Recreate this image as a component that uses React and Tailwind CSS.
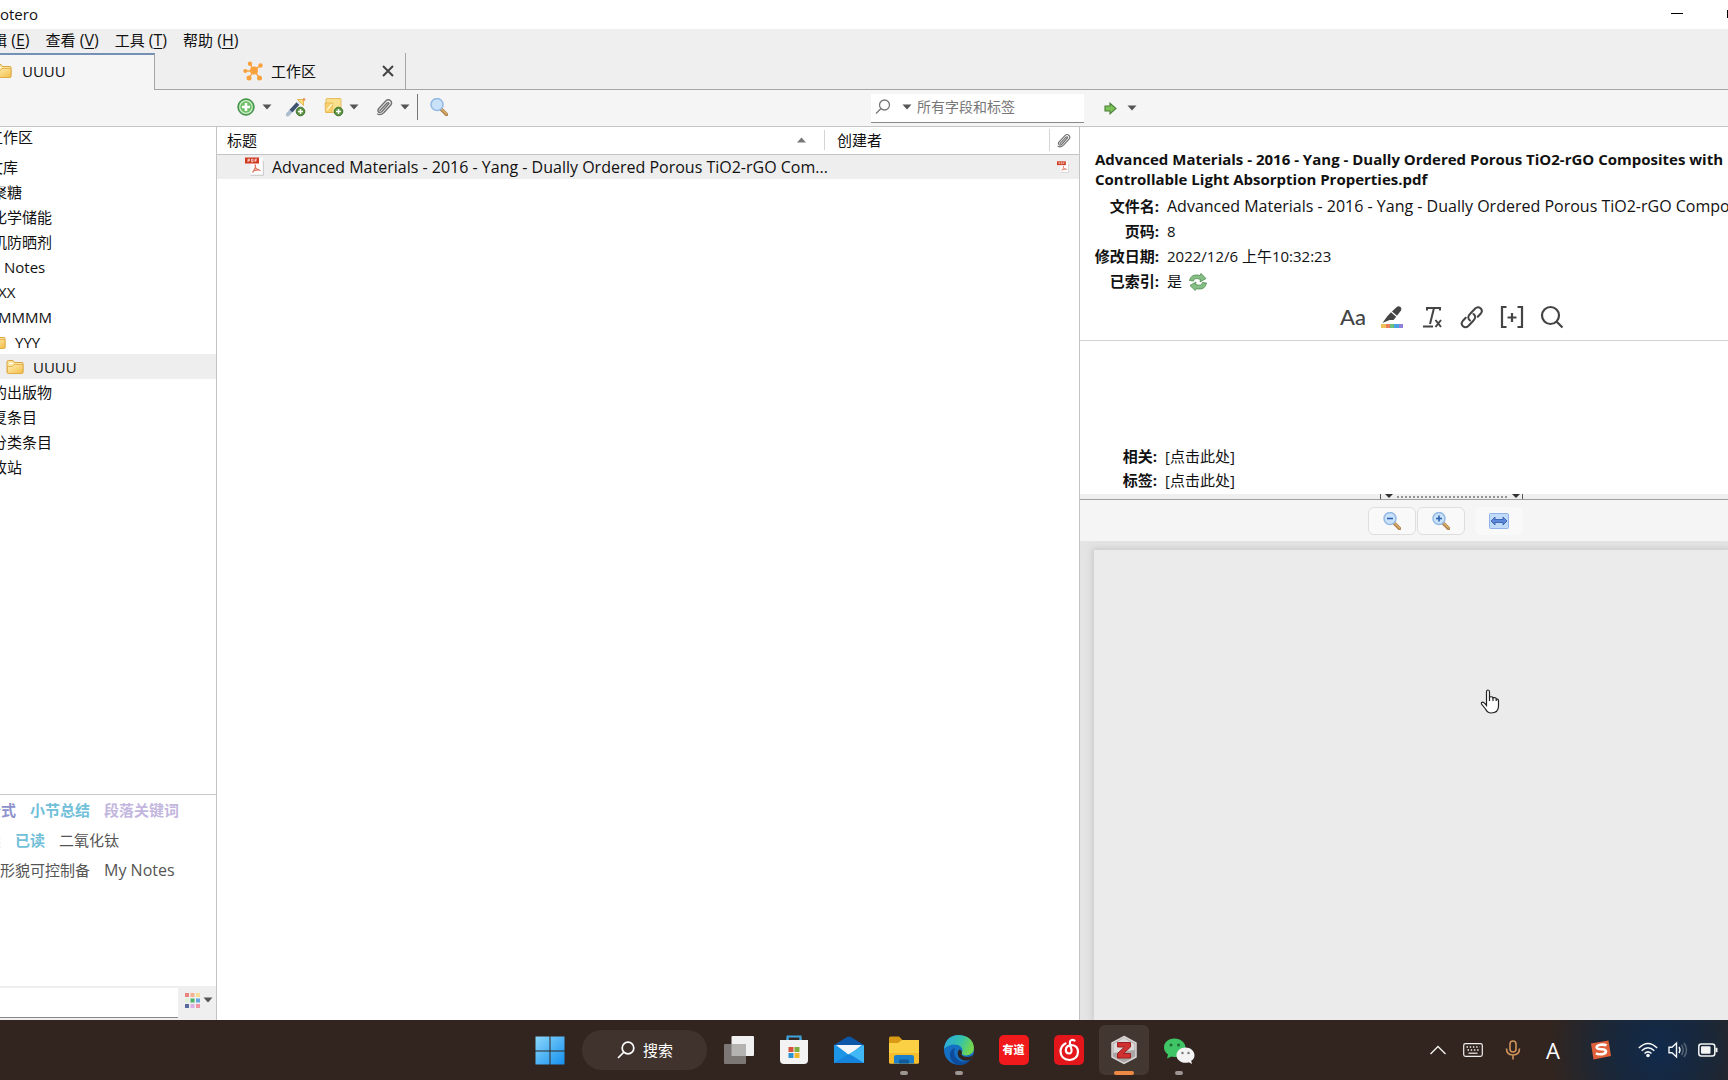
import React, { useState } from 'react';

const FONT = "font-['Open_Sans','Noto_Sans_CJK_SC',sans-serif]";

/* ---------- Small icons ---------- */

const Caret = ({ className = '' }) => (
  <svg className={`shrink-0 ${className}`} width="10" height="6" viewBox="0 0 10 6" aria-hidden="true">
    <path d="M0.5 0.5h9L5 5.5z" fill="#555" />
  </svg>
);

const FolderIcon = ({ className = '' }) => (
  <svg className={`shrink-0 ${className}`} width="18" height="16" viewBox="0 0 18 16" aria-hidden="true">
    <defs>
      <linearGradient id="folder" x1="0" y1="0" x2="1" y2="1">
        <stop offset="0" stopColor="#fff0b8" />
        <stop offset="1" stopColor="#f3bd45" />
      </linearGradient>
    </defs>
    <path d="M1 3q0-1.5 1.500-1.500h4.500l1.500 2h7.500q1 0 1 1V13q0 1.500-1.500 1.500h-13Q1 14.500 1 13z" fill="#fbe49a" stroke="#d9a441" />
    <path d="M1.500 13.500V7.500h5l1.500-2h9V13q0 1.500-1.500 1.500h-13q-1 0-1-1z" fill="url(#folder)" stroke="#e0aa45" strokeWidth="0.800" />
    <path d="M3 4.500h4" stroke="#fff" strokeWidth="1.200" />
  </svg>
);

const WorkspaceIcon = () => (
  <svg width="20" height="20" viewBox="0 0 20 20" fill="#f9a13c" stroke="#f9a13c" aria-hidden="true">
    <path d="M10.500 9.500L7 2.500M10.500 9.500l7-5M11.500 10l5 7M10 10l-3.500 7M10 10H3" strokeWidth="1.300" />
    <circle cx="11" cy="9.500" r="4" stroke="none" />
    <circle cx="7" cy="2.800" r="2.200" stroke="none" />
    <circle cx="17.500" cy="4.500" r="2.200" stroke="none" />
    <circle cx="2.300" cy="10" r="2.100" stroke="none" />
    <circle cx="6" cy="17" r="2.500" stroke="none" />
    <circle cx="16.500" cy="17" r="2.500" stroke="none" />
  </svg>
);

const AddIcon = () => (
  <svg width="18" height="18" viewBox="0 0 18 18" aria-hidden="true">
    <circle cx="9" cy="9" r="8.200" fill="#4ca650" stroke="#3c8a40" />
    <circle cx="9" cy="9" r="6.300" fill="#6cbf66" stroke="#d4efd0" strokeWidth="1.200" />
    <path d="M9 5v8M5 9h8" stroke="#fff" strokeWidth="2.600" />
  </svg>
);

const Badge = () => (
  <g>
    <circle cx="14.500" cy="14.500" r="4.300" fill="#5d9440" stroke="#3f7033" />
    <path d="M14.500 12v5M12 14.500h5" stroke="#fff" strokeWidth="1.500" />
  </g>
);

const WandIcon = () => (
  <svg width="20" height="20" viewBox="0 0 20 20" aria-hidden="true">
    <path d="M1.800 17.500L6 13" stroke="#a9bcd0" strokeWidth="4" strokeLinecap="round" />
    <path d="M5 14l7-7.500" stroke="#3d5370" strokeWidth="4" />
    <path d="M12 6.500l2.500-2.500" stroke="#dfe7ee" strokeWidth="4" />
    <path d="M11.500 2.500h6v6l-2-2-2-2z" fill="#fbdc78" stroke="#e2a93a" strokeWidth="0.800" />
    <circle cx="18" cy="2.500" r="1.300" fill="#e98a4a" />
    <Badge />
  </svg>
);

const NoteIcon = () => (
  <svg width="20" height="20" viewBox="0 0 20 20" aria-hidden="true">
    <rect x="2" y="1.500" width="15" height="14" rx="1" fill="#fae08d" stroke="#e8bd60" />
    <path d="M1 6h8l-1.500 9.500H1.500z" fill="#f7d06c" stroke="#e6b254" strokeWidth="0.800" />
    <path d="M3 13l5-6" stroke="#fff2c4" strokeWidth="1.500" />
    <Badge />
  </svg>
);

const ClipIcon = ({ size = 18 }) => (
  <svg width={size} height={size} viewBox="0 0 18 18" fill="none" strokeLinecap="round" aria-hidden="true">
    <path d="M5 12.500l7-7.500q1.500-1 2 .5L7 13.500q-2.500 2-3.800 0-.8-1.500.8-3.200L11 2.800q2.500-2 4.500 0t.3 4.200L9 14.500Q5.500 17.800 2.600 16" stroke="#6e6e6e" strokeWidth="1.400" />
  </svg>
);

const LensIcon = ({ sign }) => (
  <svg width="18" height="18" viewBox="1 1 18 18" aria-hidden="true">
    <path d="M12 12l5.500 5.500" stroke="#a8814e" strokeWidth="3.400" strokeLinecap="round" />
    <path d="M12.500 12l5 5" stroke="#e0ac66" strokeWidth="1.600" strokeLinecap="round" />
    <circle cx="8" cy="7.500" r="6" fill="#c9e2f9" stroke="#93b9e4" strokeWidth="1.500" />
    {sign && <path d="M5 7.500h6" stroke="#2d62ad" strokeWidth="1.600" />}
    {sign === '+' && <path d="M8 4.500v6" stroke="#2d62ad" strokeWidth="1.600" />}
  </svg>
);

const PdfIcon = ({ size = 19 }) => (
  <svg className="shrink-0" width={size} height={size} viewBox="0 0 19 19" aria-hidden="true">
    <path d="M4 1h14v17H5.500V7H4z" fill="#fdfdfd" />
    <path d="M5.500 18.300h12.800V4" fill="none" stroke="#c9c9c9" />
    <rect x="0" y="0.500" width="14" height="6" fill="#d23a20" />
    <path d="M3 5V2.200h1.500v1.500H3M6.500 2.200v2.600h1.500V2.200zM10 5V2.200h2M10 3.600h1.600" fill="none" stroke="#fff" strokeWidth="0.700" />
    <path d="M10 7.500q1 2-.3 4.500T7.500 15.500M10.300 10.500q1.500 2.500 5.200 3M9 13.500l5-1" fill="none" stroke="#e07560" strokeWidth="1.300" />
  </svg>
);

const LocateIcon = () => (
  <svg width="13" height="13" viewBox="0 0 13 13" aria-hidden="true">
    <path d="M1 4h5V1.200L12 6.500 6 11.800V9H1z" fill="#7cc257" stroke="#4a7d38" strokeWidth="1.100" />
  </svg>
);

const RefreshIcon = () => (
  <svg width="20" height="18" viewBox="0 0 20 18" strokeWidth="0.800" stroke="#4c8a4c" fill="#86bf85" aria-hidden="true">
    <path d="M1.500 7.500Q3 1.500 9 2l3 .5 1-2L18 5.500l-6 3.500.5-2.500Q6 4 5.500 8z" />
    <path d="M18.500 10Q17 16.500 11 16l-3-.3-.8 1.800L2 12.500 8 9l-.5 2.500Q14 13.500 14.500 9.500z" />
  </svg>
);

const ColorGrid = () => (
  <svg width="15" height="15" viewBox="0 0 15 15" aria-hidden="true">
    <rect x="0" y="0" width="4" height="4" fill="#e8847a" />
    <rect x="5.500" y="0" width="4" height="4" fill="#f6b08c" />
    <rect x="11" y="0" width="4" height="4" fill="#f7dd97" />
    <rect x="0" y="5.500" width="4" height="4" fill="#dff0d8" />
    <rect x="5.500" y="5.500" width="4" height="4" fill="#4db36d" />
    <rect x="11" y="5.500" width="4" height="4" fill="#66a5dd" />
    <rect x="0" y="11" width="4" height="4" fill="#5a6c9e" />
    <rect x="5.500" y="11" width="4" height="4" fill="#dcaee8" />
    <rect x="11" y="11" width="4" height="4" fill="#ec93a8" />
  </svg>
);

/* ---------- Note editor icons ---------- */

const HighlightIcon = () => (
  <svg width="24" height="24" viewBox="0 0 24 24" aria-hidden="true">
    <path d="M12 6.500l5-4.800q1.800-1.200 3.500.3t.5 3.500L17 10.800z" fill="#444" />
    <path d="M11 7.300l5.200 4.400-2.700 3.300H9.500l-7 3 4.800-6.800z" fill="#444" />
    <rect x="1" y="19" width="5" height="4" fill="#f0c05a" />
    <rect x="6" y="19" width="4" height="4" fill="#ea7d5e" />
    <rect x="10" y="19" width="4" height="4" fill="#6cc07a" />
    <rect x="14" y="19" width="5" height="4" fill="#4c9fe0" />
    <rect x="19" y="19" width="4" height="4" fill="#8f7fd8" />
  </svg>
);

const ClearIcon = () => (
  <svg width="24" height="24" viewBox="0 0 24 24" fill="none" stroke="#444" strokeWidth="2" aria-hidden="true">
    <path d="M7 5.500V3h13v2.500M14 3l-4 16M3 21.500h10M15.500 15l5.500 7M21 15l-5.500 7" />
  </svg>
);

const LinkIcon = () => (
  <svg width="24" height="24" viewBox="0 0 24 24" fill="none" stroke="#444" strokeWidth="2" strokeLinecap="round" aria-hidden="true">
    <path d="M10 15.500q-3.500-3 .2-6.700l5-5.300q2.700-2.500 5.300-.2t.3 5.200l-3 3.200" />
    <path d="M13.500 9q3.500 3-.2 6.700l-5 5.300q-2.700 2.500-5.300.2t-.3-5.200l3-3.200" />
  </svg>
);

const CitationIcon = () => (
  <svg width="24" height="24" viewBox="0 0 24 24" fill="none" stroke="#444" strokeWidth="2.200" aria-hidden="true">
    <path d="M6.500 2H2v20h4.500M17.500 2H22v20h-4.500M12 8v9M7.500 12.500h9" />
  </svg>
);

const FindIcon = () => (
  <svg width="24" height="24" viewBox="0 0 24 24" fill="none" stroke="#444" strokeWidth="2.200" aria-hidden="true">
    <circle cx="10.500" cy="10.500" r="8.500" />
    <path d="M16.500 16.500l6 6" />
  </svg>
);

/* ---------- Taskbar icons ---------- */

const WindowsIcon = () => (
  <svg width="30" height="30" viewBox="0 0 30 30" aria-hidden="true">
    <defs>
      <linearGradient id="win" x1="0" y1="0" x2="1" y2="1">
        <stop offset="0" stopColor="#8bd7fb" />
        <stop offset="1" stopColor="#1590ee" />
      </linearGradient>
    </defs>
    <path d="M0.500 1.500h14v14h-14zM15.500 1.500h14v14h-14zM0.500 16.500h14v13h-14zM15.500 16.500h14v13h-14z" fill="url(#win)" />
  </svg>
);

const TaskViewIcon = () => (
  <svg width="30" height="30" viewBox="0 0 30 30" aria-hidden="true">
    <rect x="7.500" y="1" width="22.500" height="20" rx="1" fill="#f0f0f0" />
    <rect x="0" y="9" width="22" height="20" rx="1" fill="#7c7775" />
    <path d="M7.500 9H22v12H7.500z" fill="#b5b3b2" />
  </svg>
);

const StoreIcon = () => (
  <svg width="30" height="30" viewBox="0 0 30 30" aria-hidden="true">
    <path d="M8.500 7V1.500h13V7" fill="none" stroke="#3fa3dc" strokeWidth="2" />
    <path d="M1 5h28v20q0 4-4 4H5q-4 0-4-4z" fill="#f3f3f3" />
    <path d="M8.500 5V3M21.500 5V3" fill="none" stroke="#3fa3dc" strokeWidth="2" />
    <path d="M9.500 12H14.500v5h-5z" fill="#d5543b" />
    <path d="M15.500 12H20.500v5h-5z" fill="#7fae3a" />
    <path d="M9.500 18H14.500v5h-5z" fill="#2d93d1" />
    <path d="M15.500 18H20.500v5h-5z" fill="#f1b52e" />
  </svg>
);

const MailIcon = () => (
  <svg width="30" height="30" viewBox="0 0 30 30" aria-hidden="true">
    <path d="M0 10L13 2q2-1 4 0l13 8v3H0z" fill="#0c56a8" />
    <path d="M0 10h30v18H0z" fill="#1c95e6" />
    <path d="M2 10h26L15 20z" fill="#f2f6fa" />
    <path d="M30 10v18L15 19z" fill="#3fb8f5" />
    <path d="M0 28l15-9 15 9z" fill="#1684dc" />
  </svg>
);

const ExplorerIcon = () => (
  <svg width="30" height="30" viewBox="0 0 30 30" aria-hidden="true">
    <path d="M0 3q0-1.500 1.500-1.500H10L13.500 5v4H0z" fill="#d99a16" />
    <path d="M0 8h9l4-3h17v22q0 1.500-1.500 1.500h-27Q0 28.500 0 27z" fill="#fcd045" />
    <path d="M0 18h30v9q0 1.500-1.500 1.500h-27Q0 28.500 0 27z" fill="#f6bd2c" />
    <path d="M5 28.500V22q0-2 2-2h16q2 0 2 2v6.500z" fill="#1b7fc9" />
    <path d="M10 28.500V26q0-1.500 1.500-1.500h7Q20 24.500 20 26v2.500z" fill="#0f5c9c" />
  </svg>
);

const EdgeIcon = () => (
  <svg width="30" height="30" viewBox="0 0 30 30" aria-hidden="true">
    <defs>
      <linearGradient id="edge" x1="0" y1="0" x2="1" y2="0.300">
        <stop offset="0" stopColor="#2aa6e4" />
        <stop offset="0.600" stopColor="#35c2a8" />
        <stop offset="1" stopColor="#72d64f" />
      </linearGradient>
    </defs>
    <circle cx="15" cy="15" r="15" fill="#1570c4" />
    <path d="M0 14Q1.500 0 15 0q14 1 15 13 0 7-8 7.500-5-.5-4-3 2-5-4-7.500Q6 8 0 14z" fill="url(#edge)" />
    <path d="M11 13q-3 9 5 13 6 2 11-2-5 7-14 6Q5 26 6 18q1-4 5-5z" fill="#0d4c9c" />
    <path d="M18 17.500q-2 4 5 4.500 3.500 0 6-2-1 3-3 5-7 2-11-2.500-2.500-4 0-8 2.500 0 3 3z" fill="#32251f" />
  </svg>
);

const NeteaseIcon = () => (
  <svg width="30" height="30" viewBox="0 0 30 30" aria-hidden="true">
    <rect width="30" height="30" rx="5" fill="#e3161c" />
    <path d="M20.500 5.500q-3.500-1.500-4.500 1-.5 1.500 1.500 8 .5 4-2.500 4t-3.200-3.500q.2-4.500 5.700-5 6.500.5 6.500 7-.5 7.500-8.500 8-8.500-.5-9-8.500.2-5.500 5-8" fill="none" stroke="#fff" strokeWidth="2.200" strokeLinecap="round" />
  </svg>
);

const ZoteroIcon = () => (
  <svg width="28" height="30" viewBox="0 0 28 30" aria-hidden="true">
    <path d="M14 1.500l12 6.500v14l-12 6.500L2 22V8z" fill="#a9a5a5" stroke="#d8d5d4" strokeWidth="1.500" />
    <path d="M14 3l10.500 6v6l-21 3V9z" fill="#dbd9d9" />
    <path d="M7.500 7.500h13v4.500l-7 6.500h7V23h-13v-4.500l7-6.500h-7z" fill="#cf3030" stroke="#9c2020" strokeLinejoin="round" />
  </svg>
);

const WechatIcon = () => (
  <svg width="32" height="30" viewBox="0 0 32 30" aria-hidden="true">
    <path d="M11.500 3.500C5 3.500 1 7.500 1 12.500q0 4 4 7l-1 4 4.500-2q6 1.500 10-1 4-3 4-8c0-5-5-9-11-9z" fill="#3fc466" />
    <circle cx="8" cy="10" r="1.500" fill="#1c6b35" />
    <circle cx="15.500" cy="10" r="1.500" fill="#1c6b35" />
    <path d="M22.500 12.500c-5 0-9 3.500-9 7.700s4 7.600 9 7.600q1.700 0 3.300-.5l3.200 1.700-.8-3.300q3.300-2 3.300-5.500c0-4.200-4-7.700-9-7.700z" fill="#f3f3f3" />
    <circle cx="19.500" cy="18" r="1.200" fill="#777" />
    <circle cx="25.500" cy="18" r="1.200" fill="#777" />
  </svg>
);

const TrayChevron = () => (
  <svg width="18" height="12" viewBox="0 0 18 12" fill="none" stroke="#f1efee" strokeWidth="1.400" aria-hidden="true">
    <path d="M1.500 10L9 2.500l7.500 7.500" />
  </svg>
);

const KeyboardIcon = () => (
  <svg width="20" height="14" viewBox="0 0 20 14" fill="none" stroke="#f1efee" strokeWidth="1.200" aria-hidden="true">
    <rect x="0.700" y="0.700" width="18.600" height="12.600" rx="1.800" />
    <path d="M3.500 4h13M4.500 7h12" strokeDasharray="1.500 1.700" strokeWidth="1.500" />
    <path d="M5.500 10.200h9" />
  </svg>
);

const MicIcon = () => (
  <svg width="16" height="20" viewBox="0 0 16 20" fill="none" stroke="#d0935b" strokeWidth="1.600" aria-hidden="true">
    <rect x="5" y="1" width="6" height="11" rx="3" />
    <path d="M1.500 8.500q0 6.500 6.500 6.500t6.500-6.500M8 15v4.500" />
  </svg>
);

const SogouIcon = () => (
  <svg width="22" height="20" viewBox="0 0 22 20" aria-hidden="true">
    <path d="M1 3.500L18.500 0.500 21 16 3.500 19.500z" fill="#e0603a" />
    <path d="M16.500 5.500q-2-1.200-6-.7-4 .8-3.800 2.700.3 1.700 4.800 1.700 4.500.3 4.500 2.300-.2 2-4 2.700-4 .5-6-1" fill="none" stroke="#fff" strokeWidth="2.600" />
  </svg>
);

const WifiIcon = () => (
  <svg width="20" height="16" viewBox="0 0 20 16" fill="none" stroke="#f4f6f8" strokeWidth="1.500" aria-hidden="true">
    <path d="M0.800 6q9.200-9 18.400 0M3.700 8.800q6.300-6 12.600 0M6.500 11.500q3.500-3.300 7 0" />
    <circle cx="10" cy="13.500" r="1.800" fill="#f4f6f8" stroke="none" />
  </svg>
);

const VolumeIcon = () => (
  <svg width="20" height="18" viewBox="0 0 20 18" fill="none" stroke="#f4f6f8" strokeWidth="1.400" aria-hidden="true">
    <path d="M1 6.200h3L8.500 2v14L4 11.800H1z" />
    <path d="M11 6q2 3 0 6" />
    <path d="M13.500 3.800q3.500 5.200 0 10.400M16 2q5 7 0 14" stroke="#5a6675" />
  </svg>
);

const BatteryIcon = () => (
  <svg width="20" height="14" viewBox="0 0 20 14" aria-hidden="true">
    <rect x="0.800" y="1" width="16" height="12" rx="2.500" fill="none" stroke="#f4f4f4" strokeWidth="1.500" />
    <rect x="3" y="3.200" width="9.500" height="7.600" rx="1" fill="#f4f4f4" />
    <path d="M18.500 4.800v4.400" stroke="#f4f4f4" strokeWidth="2" />
  </svg>
);

/* ---------- Data ---------- */

const menus = [
  { label: '辑', key: 'E' },
  { label: '查看', key: 'V' },
  { label: '工具', key: 'T' },
  { label: '帮助', key: 'H' },
];

const collections = [
  { label: '文库', indent: '-ml-3' },
  { label: '聚糖', indent: '-ml-2' },
  { label: '化学储能', indent: '-ml-2' },
  { label: '机防晒剂', indent: '-ml-2' },
  { label: 'Notes', indent: 'ml-1' },
  { label: 'XX', indent: '-ml-0.5' },
  { label: 'MMMM', indent: '-ml-0.5' },
  { label: 'YYY', indent: '-ml-3', folder: true },
  { label: 'UUUU', indent: 'ml-1.5', folder: true },
  { label: '的出版物', indent: '-ml-2' },
  { label: '复条目', indent: '-ml-2' },
  { label: '分类条目', indent: '-ml-2' },
  { label: '收站', indent: '-ml-2' },
];

const fields = [
  { label: '文件名:', value: 'Advanced Materials - 2016 - Yang - Dually Ordered Porous TiO2-rGO Composites with.pdf', size: 'text-base/[25px]' },
  { label: '页码:', value: '8' },
  { label: '修改日期:', value: '2022/12/6 上午10:32:23' },
];

/* ---------- Panels ---------- */

function Header() {
  return (
    <header>
      <div className="flex h-[29px] items-center justify-between bg-white pb-0.5">
        <span>otero</span>
        <div className="flex items-center gap-11">
          <button aria-label="最小化" className="h-px w-3 bg-black" />
          <button aria-label="最大化" className="h-2 w-px bg-black" />
        </div>
      </div>

      <nav className="-ml-2 flex h-6 items-center gap-4 bg-[#efefef] pb-0.5">
        {menus.map((menu) => (
          <button key={menu.key} className="whitespace-nowrap">
            {menu.label}
            <span className="text-base/5"> (<span className="underline underline-offset-2">{menu.key}</span>)</span>
          </button>
        ))}
      </nav>

      <div role="tablist" className="flex h-[37px] bg-[#efefef]">
        <button role="tab" aria-selected="true" className="flex w-[155px] items-center gap-2.5 overflow-hidden border-t-2 border-r border-t-[#7590b5] border-r-[#a5a5a5] bg-[#f5f5f5] pb-1">
          <FolderIcon className="-ml-1.5" />
          UUUU
        </button>
        <div className="flex w-[251px] items-center border-r border-b border-[#a5a5a5] pr-[11px] pl-[88px]">
          <button role="tab" aria-selected="false" className="flex flex-1 items-center gap-2">
            <WorkspaceIcon />
            工作区
          </button>
          <button aria-label="关闭">
            <svg width="12" height="12" viewBox="0 0 12 12" stroke="#444" strokeWidth="2">
              <path d="M1 1l10 10M11 1L1 11" />
            </svg>
          </button>
        </div>
        <div className="flex-1 border-b border-[#a5a5a5]" />
      </div>
    </header>
  );
}

function Toolbar() {
  return (
    <div className="flex h-[37px] items-center border-b border-[#c4c4c4] bg-[#f5f5f5]">
      <div className="ml-[237px] flex flex-1 items-center pb-0.5">
        <button aria-label="新建条目" className="flex items-center gap-[7px]"><AddIcon /><Caret /></button>
        <button aria-label="通过标识符添加" className="ml-3.5"><WandIcon /></button>
        <button aria-label="新建笔记" className="ml-[18px] flex items-center gap-[5px]"><NoteIcon /><Caret /></button>
        <button aria-label="添加附件" className="ml-4 flex items-center gap-[7px]"><ClipIcon /><Caret /></button>
        <div className="ml-[7px] h-[26px] w-px bg-[#777]" />
        <button aria-label="高级搜索" className="ml-3"><LensIcon /></button>
      </div>
      <label className="flex h-[29px] w-[213px] items-center border-b border-[#888] bg-white pb-0.5 pl-1">
        <svg width="16" height="16" viewBox="0 0 16 16" fill="none" stroke="#777" strokeWidth="1.300" aria-hidden="true">
          <circle cx="9.500" cy="6" r="5" />
          <path d="M6 9.500L1 14.500" />
        </svg>
        <Caret className="ml-[11px]" />
        <input aria-label="搜索" placeholder="所有字段和标签" className="ml-[5px] min-w-0 flex-1 text-sm outline-none placeholder:text-[#777]" />
      </label>
      <div className="flex w-[644px] items-center pl-5">
        <button aria-label="定位" className="flex items-center gap-2.5"><LocateIcon /><Caret /></button>
      </div>
    </div>
  );
}

function Collections() {
  const [selected, setSelected] = useState('UUUU');
  return (
    <aside className="flex w-1/8 flex-col overflow-hidden bg-white">
      <div className="-ml-3 h-[27px]">工作区</div>
      <ul className="flex-1">
        {collections.map((c) => (
          <li key={c.label}>
            <button
              onClick={() => setSelected(c.label)}
              className={`flex h-[25px] w-full items-center overflow-hidden whitespace-nowrap ${selected === c.label ? 'bg-[#eeeeee]' : ''}`}
            >
              <span className={`flex items-center gap-[9px] ${c.indent}`}>
                {c.folder && <FolderIcon />}
                {c.label}
              </span>
            </button>
          </li>
        ))}
      </ul>

      {/* Tag selector */}
      <div className="flex h-[192px] flex-col gap-2 overflow-hidden border-t border-[#c8c8c8] pt-1 leading-[22px] whitespace-nowrap text-[#555]">
        <div className="-ml-3.5 flex gap-3.5 font-bold">
          <button className="text-[#8c90cc]">公式</button>
          <button className="text-[#72bfd9]">小节总结</button>
          <button className="text-[#c3b6de]">段落关键词</button>
        </div>
        <div className="-ml-3.5 flex gap-3.5">
          <button className="font-bold text-[#f0c8b0]">读</button>
          <button className="font-bold text-[#72bfd9]">已读</button>
          <button>二氧化钛</button>
        </div>
        <div className="flex gap-3.5">
          <button>形貌可控制备</button>
          <button className="text-base/[22px]">My Notes</button>
        </div>
      </div>
      <div className="flex h-[34px] items-start bg-[#efefef] pt-0.5">
        <input aria-label="筛选标签" className="h-[30px] min-w-0 flex-1 border-b border-[#888] bg-white outline-none" />
        <button aria-label="标签操作" className="flex h-6 items-center gap-[3px] pr-[3px] pl-[7px]"><ColorGrid /><Caret /></button>
      </div>
    </aside>
  );
}

function ItemList() {
  return (
    <main className="min-w-0 flex-1 border-x border-[#c4c4c4] bg-white">
      <table className="w-full table-fixed border-collapse text-left">
        <colgroup>
          <col />
          <col className="w-[225px]" />
          <col className="w-[30px]" />
        </colgroup>
        <thead>
          <tr className="h-[27px] border-b border-[#c4c4c4]">
            <th className="p-0 font-normal">
              <div className="flex items-center justify-between pr-[18px] pl-2.5">
                标题
                <svg width="9" height="6" viewBox="0 0 9 6" aria-hidden="true"><path d="M0 5.500h9L4.500 0.500z" fill="#777" /></svg>
              </div>
            </th>
            <th className="p-0 font-normal"><div className="border-l border-[#d5d5d5] pl-3">创建者</div></th>
            <th aria-label="附件" className="p-0"><div className="flex h-[22px] items-center border-l border-[#d5d5d5] pl-1.5"><ClipIcon size={15} /></div></th>
          </tr>
        </thead>
        <tbody>
          <tr className="h-[25px] bg-[#eeeeee]">
            <td className="p-0">
              <div className="flex items-center gap-2 pl-7 text-base/5 whitespace-nowrap">
                <PdfIcon />
                Advanced Materials - 2016 - Yang - Dually Ordered Porous TiO2-rGO Com...
              </div>
            </td>
            <td className="p-0" />
            <td className="p-0 pl-2"><PdfIcon size={12} /></td>
          </tr>
        </tbody>
      </table>
    </main>
  );
}

function Grippy() {
  return (
    <div className="flex h-1.5 justify-center border-b border-[#a0a0a0] bg-[#efefef] pl-[94px]">
      <svg width="143" height="5" viewBox="0 0 143 5" aria-hidden="true">
        <path d="M0.500 0v5M142.500 0v5" stroke="#555" />
        <path d="M5 0h8L9 4zM132 0h8l-4 4z" fill="#333" />
        <path d="M17 3h112" stroke="#777" strokeWidth="1.500" strokeDasharray="2 2" />
      </svg>
    </div>
  );
}

function ItemPane() {
  return (
    <section className="flex w-[37.5%] flex-col overflow-hidden bg-white">
      <h1 className="w-[700px] pt-[22px] pl-[15px] leading-5 font-bold">
        Advanced Materials - 2016 - Yang - Dually Ordered Porous TiO2-rGO Composites with
        <br />
        Controllable Light Absorption Properties.pdf
      </h1>

      <dl className="mt-[5px] grid grid-cols-[79px_1fr] gap-x-2 leading-[25px] whitespace-nowrap">
        {fields.map((f) => (
          <React.Fragment key={f.label}>
            <dt className="text-right font-bold">{f.label}</dt>
            <dd className={f.size}>{f.value}</dd>
          </React.Fragment>
        ))}
        <dt className="text-right font-bold">已索引:</dt>
        <dd className="flex items-center gap-1.5">
          是
          <button aria-label="重建索引"><RefreshIcon /></button>
        </dd>
      </dl>

      {/* Note editor */}
      <div className="flex h-[47px] items-center justify-center gap-4 border-b border-[#d2d2d2] pl-24">
        <button className="w-6 font-[Lato] text-[22px] font-medium text-[#444]" aria-label="格式">Aa</button>
        <button aria-label="高亮"><HighlightIcon /></button>
        <button aria-label="清除格式"><ClearIcon /></button>
        <button aria-label="链接"><LinkIcon /></button>
        <button aria-label="插入引文"><CitationIcon /></button>
        <button aria-label="查找"><FindIcon /></button>
      </div>
      <textarea aria-label="笔记" className="h-[103px] resize-none outline-none" />

      <dl className="grid grid-cols-[77px_1fr] gap-x-2 pb-0.5 leading-6">
        <dt className="text-right font-bold">相关:</dt>
        <dd><button>[点击此处]</button></dd>
        <dt className="text-right font-bold">标签:</dt>
        <dd><button>[点击此处]</button></dd>
      </dl>

      {/* Preview */}
      <div className="flex flex-1 flex-col">
        <Grippy />
        <div className="flex h-[41px] items-center justify-center bg-[#f5f5f5] pl-[83px]">
          <button aria-label="缩小" className="flex h-7 w-12 items-center justify-center rounded-md border border-[#dedede] bg-[#f9f9f9]"><LensIcon sign="-" /></button>
          <button aria-label="放大" className="ml-px flex h-7 w-12 items-center justify-center rounded-md border border-[#dedede] bg-[#f9f9f9]"><LensIcon sign="+" /></button>
          <button aria-label="适合宽度" className="ml-2.5 flex h-7 w-12 items-center justify-center rounded-md bg-[#f9f9f9]">
            <svg width="20" height="16" viewBox="0 0 20 16" aria-hidden="true">
              <rect x="0.500" y="0.500" width="19" height="15" rx="1" fill="#c0daf9" stroke="#8fb2e8" />
              <path d="M2 8l4-4v2.500h8V4l4 4-4 4V9.500H6V12z" fill="#5d88d8" stroke="#2f55ab" strokeWidth="0.800" />
            </svg>
          </button>
        </div>
        <div className="relative flex flex-1 overflow-hidden bg-[#e4e4e4] pt-[9px] pl-3.5">
          <div className="flex-1 bg-[#ebebeb] shadow-[0_0_6px_2px_#cccccc]" />
          <svg className="absolute top-[148px] left-[400px]" width="20" height="26" viewBox="0 0 20 26" aria-hidden="true">
            <path d="M6.500 15V3q0-2 1.500-2t1.500 2v5q3-.8 3.500.8 3-.6 3.300 1 2.200 0 2.200 2V17q0 7-7.500 7-3.500 0-5.500-4L1.500 15q-.5-1.800 1.200-1.800 1.300 0 3.800 3.300z" fill="#fff" stroke="#222" strokeWidth="1.200" />
            <path d="M9.500 7.500V12M13 8.500V12M16.200 9.800V12" stroke="#222" strokeWidth="1.200" />
          </svg>
        </div>
      </div>
    </section>
  );
}

const AppButton = ({ label, children, active = false, running = false }) => (
  <button
    aria-label={label}
    className={`relative flex h-[50px] w-[50px] items-center justify-center rounded-md ${active ? 'bg-[#433732]' : ''}`}
  >
    {children}
    {active && <span className="absolute bottom-0 left-[15px] h-1 w-5 rounded-full bg-[#ee8a44]" />}
    {running && <span className="absolute bottom-0 left-[21px] h-1 w-2 rounded-full bg-[#9d9592]" />}
  </button>
);

function Taskbar() {
  return (
    <footer className="grid h-[60px] grid-cols-[1fr_auto_1fr] items-center bg-[#32251f] bg-[radial-gradient(ellipse_110px_120px_at_96%_50%,#102a4c,#1b2737_50%,transparent)] text-white">
      <div />
      <div className="flex items-center gap-[5px]">
        <AppButton label="开始"><WindowsIcon /></AppButton>
        <button className="mx-0.5 flex h-10 w-[125px] items-center justify-center gap-2 rounded-full bg-[#40332d] pl-0.5">
          <svg width="18" height="18" viewBox="0 0 18 18" fill="none" stroke="#fff" strokeWidth="1.700" aria-hidden="true">
            <circle cx="11" cy="7" r="5.800" />
            <path d="M7 11l-6 6" />
          </svg>
          搜索
        </button>
        <AppButton label="任务视图"><TaskViewIcon /></AppButton>
        <AppButton label="应用商店"><StoreIcon /></AppButton>
        <AppButton label="邮件"><MailIcon /></AppButton>
        <AppButton label="文件资源管理器" running><ExplorerIcon /></AppButton>
        <AppButton label="浏览器" running><EdgeIcon /></AppButton>
        <AppButton label="有道">
          <span className="flex h-[30px] w-[30px] items-center justify-center rounded-[5px] bg-[#f0191c] text-[11px] font-black whitespace-nowrap">有道</span>
        </AppButton>
        <AppButton label="音乐"><NeteaseIcon /></AppButton>
        <AppButton label="Zotero" active><ZoteroIcon /></AppButton>
        <AppButton label="微信" running><WechatIcon /></AppButton>
      </div>
      <div className="flex items-center justify-end pr-[5px]">
        <button aria-label="显示隐藏的图标" className="flex w-[30px] justify-center"><TrayChevron /></button>
        <button aria-label="触摸键盘" className="flex w-10 justify-center"><KeyboardIcon /></button>
        <button aria-label="麦克风" className="flex w-10 justify-center"><MicIcon /></button>
        <button className="w-10 text-center text-[22px]">A</button>
        <button aria-label="输入法" className="mr-1 flex w-14 justify-center"><SogouIcon /></button>
        <button aria-label="网络" className="flex w-[30px] justify-center"><WifiIcon /></button>
        <button aria-label="音量" className="flex w-[30px] justify-center"><VolumeIcon /></button>
        <button aria-label="电池" className="flex w-[30px] justify-center"><BatteryIcon /></button>
      </div>
    </footer>
  );
}

function App() {
  return (
    <div className={`flex h-screen flex-col overflow-hidden bg-[#efefef] text-[15px] leading-5 text-[#111] ${FONT}`}>
      <Header />
      <Toolbar />
      <div className="flex min-h-0 flex-1">
        <Collections />
        <ItemList />
        <ItemPane />
      </div>
      <Taskbar />
    </div>
  );
}

export default App;
